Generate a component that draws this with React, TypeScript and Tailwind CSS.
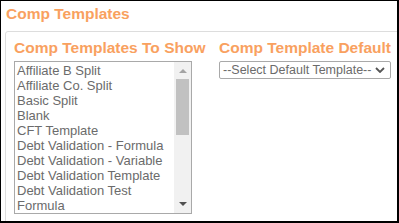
import React from "react";

const templates = [
  "Affiliate B Split",
  "Affiliate Co. Split",
  "Basic Split",
  "Blank",
  "CFT Template",
  "Debt Validation - Formula",
  "Debt Validation - Variable",
  "Debt Validation Template",
  "Debt Validation Test",
  "Formula",
];

export default function App() {
  return (
    <div
      className="w-[399px] h-[223px] overflow-hidden bg-white border-l border-t border-r-2 border-b-2 border-black"
      style={{ fontFamily: '"Liberation Sans", Arial, sans-serif' }}
    >
      <h1 className="pl-[5px] pt-[3px] h-[30px] text-[15.5px] font-bold text-[#f9a15f] leading-[20px]">
        Comp Templates
      </h1>
      <div className="ml-[4px] w-[420px] h-[220px] border border-[#dddddd] rounded-[3px] pl-[8px] pt-[6px]">
        <div className="flex">
          <div className="w-[205px]">
            <h2 className="text-[15.5px] font-bold text-[#f9a15f] leading-[20px] mb-[3px]">
              Comp Templates To Show
            </h2>
            <div className="flex w-[178px] h-[153px] border border-[#a9a9a9] bg-white">
              <ul className="flex-1 overflow-hidden pl-[2px] pt-[1px] text-[13px] leading-[15px] text-[#6b6b6b]">
                {templates.map((t) => (
                  <li key={t} className="whitespace-nowrap">
                    {t}
                  </li>
                ))}
              </ul>
              <div className="w-[17px] bg-[#f1f1f1] flex flex-col items-center">
                <div className="h-[17px] flex items-center justify-center">
                  <svg width="8" height="5" viewBox="0 0 8 5">
                    <path d="M0 5 L4 1 L8 5 Z" fill="#a3a3a3" />
                  </svg>
                </div>
                <div className="w-[13px] h-[56px] bg-[#c1c1c1]" />
                <div className="flex-1" />
                <div className="h-[17px] flex items-center justify-center">
                  <svg width="8" height="5" viewBox="0 0 8 5">
                    <path d="M0 0 L8 0 L4 4 Z" fill="#505050" />
                  </svg>
                </div>
              </div>
            </div>
          </div>
          <div>
            <h2 className="text-[15.5px] font-bold text-[#f9a15f] leading-[20px] mb-[3px]">
              Comp Template Default
            </h2>
            <div className="flex items-center w-[172px] h-[18px] border border-[#a9a9a9] rounded-[2px] pl-[3px] pr-[5px] text-[12.5px] text-[#6b6b6b]">
              <span className="flex-1 whitespace-nowrap leading-[16px]">
                --Select Default Template--
              </span>
              <svg width="10" height="6" viewBox="0 0 10 6">
                <path
                  d="M1 1 L5 5 L9 1"
                  fill="none"
                  stroke="#555555"
                  strokeWidth="1.8"
                />
              </svg>
            </div>
          </div>
        </div>
      </div>
    </div>
  );
}
